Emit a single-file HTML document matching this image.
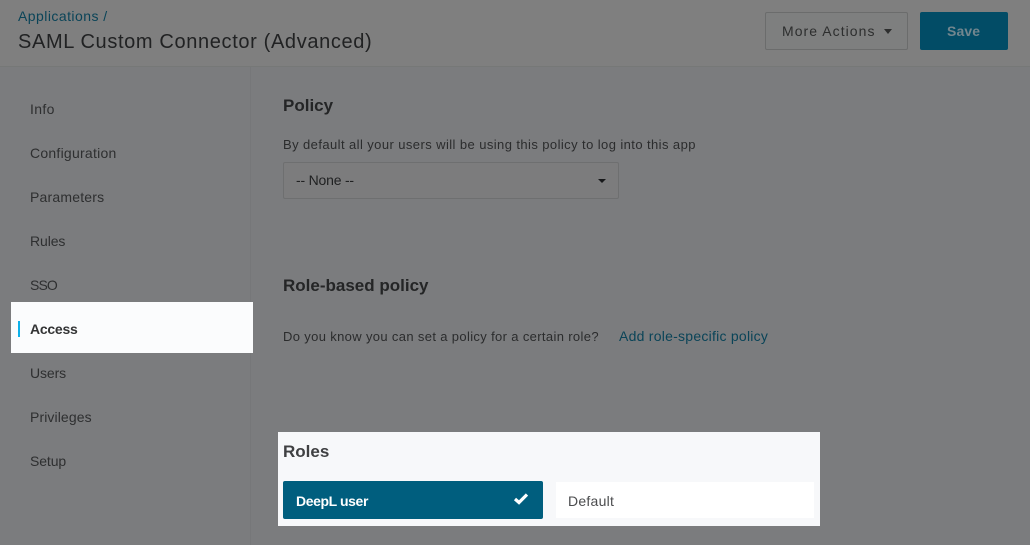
<!DOCTYPE html>
<html><head><meta charset="utf-8">
<style>
html,body{margin:0;padding:0;width:1030px;height:545px;overflow:hidden;background:#7b7c7e;font-family:"Liberation Sans",sans-serif;}
.a{position:absolute;white-space:nowrap;line-height:20px;}
.n{left:30px;font-size:14px;color:#2e2f30;}
.h{left:283px;font-size:17px;font-weight:bold;color:#242526;}
</style></head><body>
<div class="a" style="left:0;top:0;width:1030px;height:66px;background:#7f7f7f;border-bottom:1px solid #767877;"></div>
<div class="a" style="left:250px;top:67px;width:1px;height:478px;background:#767779;"></div>

<div class="a" style="left:18px;top:6px;font-size:14px;color:#0a4458;letter-spacing:.45px;">Applications /</div>
<div class="a" style="left:18px;top:31px;font-size:20px;line-height:22px;color:#212223;letter-spacing:.64px;">SAML Custom Connector (Advanced)</div>

<div class="a" style="left:765px;top:12px;width:141px;height:36px;border:1px solid #6b6c6c;border-radius:2px;background:#7e7f7f;"></div>
<div class="a" style="left:782px;top:21px;font-size:14px;color:#2d2e2e;letter-spacing:1.05px;">More Actions</div>
<div class="a" style="left:884px;top:29px;width:0;height:0;border-left:4.5px solid transparent;border-right:4.5px solid transparent;border-top:5px solid #2d2e2e;"></div>
<div class="a" style="left:920px;top:12px;width:88px;height:38px;background:#024c66;border-radius:2px;"></div>
<div class="a" style="left:947px;top:21px;font-size:14px;font-weight:bold;color:#72868e;letter-spacing:.1px;">Save</div>

<div class="a n" style="top:99px;letter-spacing:.35px;">Info</div>
<div class="a n" style="top:143px;letter-spacing:.25px;">Configuration</div>
<div class="a n" style="top:187px;letter-spacing:.2px;">Parameters</div>
<div class="a n" style="top:231px;letter-spacing:-.1px;">Rules</div>
<div class="a n" style="top:275px;letter-spacing:-.9px;">SSO</div>
<div class="a" style="left:11px;top:302px;width:242px;height:51px;background:#fbfcfd;"></div>
<div class="a" style="left:18px;top:321px;width:2px;height:16px;background:#0db1ea;"></div>
<div class="a n" style="top:319px;font-weight:bold;color:#333435;letter-spacing:-.25px;">Access</div>
<div class="a n" style="top:363px;letter-spacing:-.1px;">Users</div>
<div class="a n" style="top:407px;letter-spacing:.1px;">Privileges</div>
<div class="a n" style="top:451px;letter-spacing:-.1px;">Setup</div>

<div class="a h" style="top:96px;">Policy</div>
<div class="a" style="left:283px;top:135px;font-size:13px;color:#2b2c2d;letter-spacing:.415px;">By default all your users will be using this policy to log into this app</div>
<div class="a" style="left:283px;top:162px;width:334px;height:35px;border:1px solid #6e6f70;border-radius:2px;background:#7c7c7d;"></div>
<div class="a" style="left:296px;top:170px;font-size:14px;color:#202122;letter-spacing:-.2px;">-- None --</div>
<div class="a" style="left:598px;top:179px;width:0;height:0;border-left:4px solid transparent;border-right:4px solid transparent;border-top:4.5px solid #17181a;"></div>

<div class="a h" style="top:276px;">Role-based policy</div>
<div class="a" style="left:283px;top:327px;font-size:13px;color:#2b2c2d;letter-spacing:.35px;">Do you know you can set a policy for a certain role?</div>
<div class="a" style="left:619px;top:326px;font-size:14px;color:#0a4458;letter-spacing:.25px;">Add role-specific policy</div>

<div class="a" style="left:278px;top:432px;width:542px;height:94px;background:#f7f8fa;"></div>
<div class="a h" style="top:442px;color:#3f4042;">Roles</div>
<div class="a" style="left:283px;top:481px;width:260px;height:38px;background:#005e7e;border-radius:2px;"></div>
<div class="a" style="left:296px;top:491px;font-size:14px;font-weight:bold;color:#fff;letter-spacing:-.4px;">DeepL user</div>
<svg class="a" style="left:513px;top:492px;" width="16" height="14" viewBox="0 0 16 14"><path d="M2 7 L6 10.5 L14 2.5" fill="none" stroke="#fff" stroke-width="3.2"/></svg>
<div class="a" style="left:556px;top:482px;width:258px;height:36px;background:#fff;"></div>
<div class="a" style="left:568px;top:491px;font-size:14px;color:#4b4c4e;letter-spacing:.25px;">Default</div>
</body></html>
